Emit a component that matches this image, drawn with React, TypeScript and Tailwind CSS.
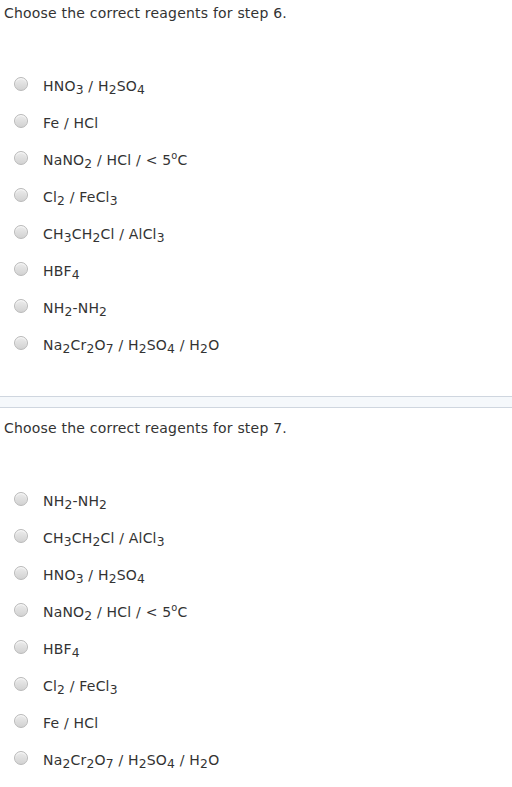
import React from 'react'

type Option = React.ReactNode

const q1: Option[] = [
  <>HNO<sub>3</sub> / H<sub>2</sub>SO<sub>4</sub></>,
  <>Fe / HCl</>,
  <>NaNO<sub>2</sub> / HCl / &lt; 5<sup>o</sup>C</>,
  <>Cl<sub>2</sub> / FeCl<sub>3</sub></>,
  <>CH<sub>3</sub>CH<sub>2</sub>Cl / AlCl<sub>3</sub></>,
  <>HBF<sub>4</sub></>,
  <>NH<sub>2</sub>-NH<sub>2</sub></>,
  <>Na<sub>2</sub>Cr<sub>2</sub>O<sub>7</sub> / H<sub>2</sub>SO<sub>4</sub> / H<sub>2</sub>O</>,
]

const q2: Option[] = [
  <>NH<sub>2</sub>-NH<sub>2</sub></>,
  <>CH<sub>3</sub>CH<sub>2</sub>Cl / AlCl<sub>3</sub></>,
  <>HNO<sub>3</sub> / H<sub>2</sub>SO<sub>4</sub></>,
  <>NaNO<sub>2</sub> / HCl / &lt; 5<sup>o</sup>C</>,
  <>HBF<sub>4</sub></>,
  <>Cl<sub>2</sub> / FeCl<sub>3</sub></>,
  <>Fe / HCl</>,
  <>Na<sub>2</sub>Cr<sub>2</sub>O<sub>7</sub> / H<sub>2</sub>SO<sub>4</sub> / H<sub>2</sub>O</>,
]

function Radio() {
  return (
    <span className="block h-[14px] w-[14px] shrink-0 rounded-full border border-[#b9b9b9] bg-gradient-to-b from-[#ececec] to-[#d2d2d2] shadow-[inset_0_1px_1px_rgba(255,255,255,0.8)]" />
  )
}

function Question({ step, options }: { step: number; options: Option[] }) {
  return (
    <section className="pt-[4px]">
      <p className="pl-[4px] text-[14px] leading-[18px] tracking-[0.2px]">
        Choose the correct reagents for step {step}.
      </p>
      <ul className="mt-[45px]">
        {options.map((opt, i) => (
          <li key={i} className="flex h-[37px] items-center">
            <span className="mb-[3px] ml-[14px] mr-[15px]">
              <Radio />
            </span>
            <span className="text-[14px] leading-[18px] tracking-[0.2px] [&_sub]:-bottom-[0.3em] [&_sub]:text-[length:88%] [&_sup]:text-[length:70%] [&_sup]:-top-[0.6em]">
              {opt}
            </span>
          </li>
        ))}
      </ul>
    </section>
  )
}

export default function App() {
  return (
    <main className="min-h-[787px] bg-white text-[#333] font-['DejaVu_Sans',Verdana,sans-serif]">
      <Question step={6} options={q1} />
      <div className="mt-[33px] h-[12px] border-y border-[#cfd6df] bg-[#f5f8fb]" />
      <div className="mt-[7px]">
        <Question step={7} options={q2} />
      </div>
    </main>
  )
}
